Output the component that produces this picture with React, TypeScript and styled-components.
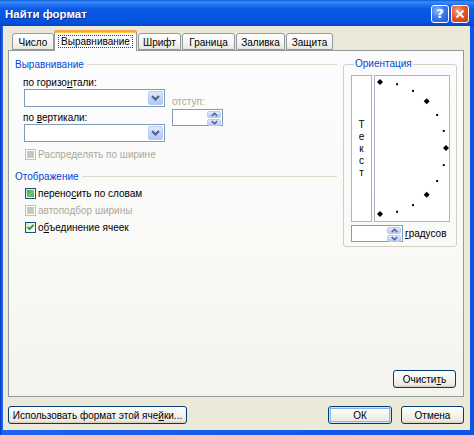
import React from 'react';
import styled, { createGlobalStyle } from 'styled-components';

const GlobalStyle = createGlobalStyle`
  html, body {
    margin: 0;
    padding: 0;
    background: #ffffff;
  }
  body {
    font-family: "Liberation Sans", Arial, sans-serif;
    font-size: 10px;
    color: #000;
  }
  * {
    box-sizing: border-box;
  }
`;

const Window = styled.div`
  width: 474px;
  height: 435px;
  display: flex;
  flex-direction: column;
  background: linear-gradient(90deg, #0831b8 0, #1d63ec 2px, #0b55e4 100%);
  overflow: hidden;
`;

const TitleBar = styled.div`
  height: 26px;
  flex: none;
  display: flex;
  align-items: center;
  gap: 2px;
  padding: 1px 5px 0 5px;
  background: linear-gradient(
    180deg,
    #0a5ad8 0%,
    #3d8df8 8%,
    #2676f4 16%,
    #0b5be8 34%,
    #0556e4 60%,
    #0553e0 82%,
    #0447c8 100%
  );
`;

const Title = styled.div`
  flex: 1;
  color: #ffffff;
  font-weight: bold;
  font-size: 11.5px;
  text-shadow: 1px 1px 0 #0a2a8c;
`;

const TitleButton = styled.div<{ $kind: 'help' | 'close' }>`
  width: 18px;
  height: 18px;
  border: 1px solid #ffffff;
  border-radius: 3px;
  display: flex;
  align-items: center;
  justify-content: center;
  color: #ffffff;
  font-family: "DejaVu Sans", sans-serif;
  font-weight: bold;
  font-size: 13px;
  background: ${({ $kind }) =>
    $kind === 'close'
      ? 'radial-gradient(circle at 35% 30%, #f5a582 0%, #e2582c 45%, #c43b10 100%)'
      : 'radial-gradient(circle at 35% 30%, #8cbcff 0%, #3a7cf2 45%, #1c56d6 100%)'};
`;

const Body = styled.div`
  flex: 1;
  margin: 0 4px 5px 3px;
  padding: 4px 6px 0 5px;
  background: #ece9d8;
  display: flex;
  flex-direction: column;
`;

const TabRow = styled.div`
  height: 20px;
  display: flex;
  align-items: flex-end;
  padding-left: 4px;
  position: relative;
  z-index: 1;
`;

const Tab = styled.div<{ $w: number; $active?: boolean }>`
  width: ${({ $w }) => $w}px;
  height: ${({ $active }) => ($active ? 21 : 17)}px;
  margin-left: ${({ $active }) => ($active ? 0 : 1)}px;
  margin-bottom: ${({ $active }) => ($active ? -1 : 0)}px;
  display: flex;
  align-items: center;
  justify-content: center;
  border: 1px solid #919b9c;
  border-bottom: ${({ $active }) => ($active ? 'none' : '1px solid #919b9c')};
  border-top: ${({ $active }) => ($active ? '2px solid #f4a64a' : '1px solid #919b9c')};
  border-radius: 3px 3px 0 0;
  background: ${({ $active }) =>
    $active ? '#fcfcfe' : 'linear-gradient(180deg, #ffffff 0%, #f7f6f2 50%, #e9e7df 100%)'};
  box-shadow: ${({ $active }) => ($active ? 'inset 0 1px 0 #ffc83c' : 'none')};
  padding-top: ${({ $active }) => ($active ? 0 : 1)}px;
  &:first-child {
    margin-left: 0;
  }
`;

const FocusLabel = styled.span`
  border: 1px dotted #404040;
  padding: 0 2px;
  line-height: 11px;
`;

const Panel = styled.div`
  height: 347px;
  border: 1px solid #919b9c;
  background: linear-gradient(180deg, #fcfcfe 0%, #f9f9f6 60%, #f4f3ee 100%);
  display: flex;
  flex-direction: column;
  padding: 7px 6px 8px 6px;
`;

const PanelTop = styled.div`
  flex: 1;
  display: flex;
  align-items: flex-start;
  gap: 6px;
`;

const LeftColumn = styled.div`
  width: 322px;
  display: flex;
  flex-direction: column;
`;

const GroupHeader = styled.div<{ $top?: number }>`
  height: 13px;
  margin-top: ${({ $top }) => $top ?? 0}px;
  display: flex;
  align-items: center;
  gap: 3px;
  color: #0046d5;
  &::after {
    content: '';
    flex: 1;
    height: 1px;
    background: #d9d8c9;
  }
`;

const AlignBlock = styled.div`
  display: flex;
  gap: 7px;
  padding-left: 8px;
  margin-top: 5px;
`;

const FieldStack = styled.div`
  display: flex;
  flex-direction: column;
`;

const Label = styled.div<{ $disabled?: boolean; $top?: number }>`
  height: 13px;
  line-height: 13px;
  margin-top: ${({ $top }) => $top ?? 0}px;
  color: ${({ $disabled }) => ($disabled ? '#aca899' : '#000')};
  white-space: nowrap;
`;

const U = styled.span`
  text-decoration: underline;
  text-underline-offset: 1px;
`;

const Combo = styled.div<{ $top?: number }>`
  width: 141px;
  height: 18px;
  margin-top: ${({ $top }) => $top ?? 0}px;
  margin-left: 1px;
  border: 1px solid #7f9db9;
  background: #ffffff;
  display: flex;
  justify-content: flex-end;
  padding: 1px;
`;

const DropButton = styled.div`
  width: 15px;
  border: 1px solid #b9cbf3;
  border-radius: 2px;
  background: linear-gradient(180deg, #e1eafe 0%, #c5d5fb 50%, #b3c7f5 100%);
  display: flex;
  align-items: center;
  justify-content: center;
`;

const IndentBlock = styled.div`
  display: flex;
  flex-direction: column;
  padding-top: 19px;
`;

const SpinBox = styled.div<{ $w: number; $top?: number }>`
  width: ${({ $w }) => $w}px;
  height: 17px;
  margin-top: ${({ $top }) => $top ?? 0}px;
  border: 1px solid #7f9db9;
  background: #ffffff;
  display: flex;
  justify-content: flex-end;
  padding: 1px;
`;

const SpinButtons = styled.div`
  width: 14px;
  display: flex;
  flex-direction: column;
  gap: 1px;
`;

const SpinHalf = styled.div`
  flex: 1;
  border: 1px solid #b9cbf3;
  border-radius: 2px;
  background: linear-gradient(180deg, #e1eafe 0%, #c5d5fb 60%, #b8cbf6 100%);
  display: flex;
  align-items: center;
  justify-content: center;
`;

const CheckRow = styled.div<{ $top: number; $disabled?: boolean }>`
  height: 13px;
  margin-top: ${({ $top }) => $top}px;
  padding-left: 10px;
  display: flex;
  align-items: center;
  gap: 2px;
  color: ${({ $disabled }) => ($disabled ? '#aca899' : '#000')};
  white-space: nowrap;
`;

const Box = styled.span<{ $disabled?: boolean }>`
  width: 11px;
  height: 11px;
  flex: none;
  border: 1px solid ${({ $disabled }) => ($disabled ? '#c5c3b4' : '#1c5180')};
  background: ${({ $disabled }) =>
    $disabled ? '#ffffff' : 'linear-gradient(135deg, #dcdcd7 0%, #f5f5f2 60%, #ffffff 100%)'};
  display: flex;
  align-items: center;
  justify-content: center;
`;

const MixedMark = styled.span<{ $disabled?: boolean }>`
  width: 7px;
  height: 7px;
  background: ${({ $disabled }) =>
    $disabled ? '#cac8bb' : 'linear-gradient(135deg, #3fa33f 0%, #73c373 50%, #4db04d 100%)'};
`;

const Orientation = styled.fieldset`
  width: 114px;
  margin: 0;
  padding: 5px 6px 4px 7px;
  border: 1px solid #d0d0bf;
  border-radius: 3px;
  display: flex;
  flex-direction: column;
  gap: 3px;
`;

const Legend = styled.legend`
  color: #0046d5;
  padding: 0 1px;
  margin-left: 3px;
  line-height: 12px;
`;

const DialRow = styled.div`
  display: flex;
  gap: 2px;
  height: 147px;
`;

const TextBox = styled.div`
  width: 21px;
  border: 1px solid #aab6c6;
  background: #ffffff;
  display: flex;
  flex-direction: column;
  align-items: center;
  justify-content: center;
  padding-top: 1px;
`;

const Letter = styled.span`
  line-height: 12px;
  font-size: 10px;
`;

const DialBox = styled.div`
  width: 76px;
  border: 1px solid #aab6c6;
  background: #ffffff;
`;

const DegreeRow = styled.div`
  display: flex;
  align-items: center;
  gap: 2px;
`;

const PanelFooter = styled.div`
  display: flex;
  justify-content: flex-end;
  padding-right: 1px;
`;

const Button = styled.button<{ $w: number; $default?: boolean }>`
  width: ${({ $w }) => $w}px;
  height: 18px;
  padding: 0;
  font: inherit;
  color: #000;
  border: 1px solid #003c74;
  border-radius: 3px;
  background: linear-gradient(180deg, #ffffff 0%, #f6f6f2 40%, #eceae2 85%, #d8d2c6 100%);
  box-shadow: ${({ $default }) =>
    $default
      ? 'inset 0 0 0 1px #cfe2fc, inset 0 0 0 2px #8eb2ea'
      : 'inset 0 -1px 0 #d6d0c5'};
  display: flex;
  align-items: center;
  justify-content: center;
  white-space: nowrap;
`;

const ButtonRow = styled.div`
  display: flex;
  align-items: center;
  gap: 9px;
  margin-top: 9px;
  & > :first-child {
    margin-right: auto;
  }
`;

const Chevron = ({ up }: { up?: boolean }) => (
  <svg width="7" height="5" viewBox="0 0 7 5">
    <path
      d={up ? 'M0.8 4 L3.5 1.3 L6.2 4' : 'M0.8 1 L3.5 3.7 L6.2 1'}
      fill="none"
      stroke="#4d6185"
      strokeWidth="1.6"
    />
  </svg>
);

const ComboField = ({ top }: { top?: number }) => (
  <Combo $top={top}>
    <DropButton>
      <svg width="9" height="6" viewBox="0 0 9 6">
        <path d="M1 1 L4.5 4.5 L8 1" fill="none" stroke="#4d6185" strokeWidth="2" />
      </svg>
    </DropButton>
  </Combo>
);

const Spin = ({ w, top }: { w: number; top?: number }) => (
  <SpinBox $w={w} $top={top}>
    <SpinButtons>
      <SpinHalf>
        <Chevron up />
      </SpinHalf>
      <SpinHalf>
        <Chevron />
      </SpinHalf>
    </SpinButtons>
  </SpinBox>
);

type CheckKind = 'mixed' | 'checked';

const Check = ({
  kind,
  disabled,
  top,
  children,
}: {
  kind: CheckKind;
  disabled?: boolean;
  top: number;
  children: React.ReactNode;
}) => (
  <CheckRow $top={top} $disabled={disabled}>
    <Box $disabled={disabled}>
      {kind === 'mixed' ? (
        <MixedMark $disabled={disabled} />
      ) : (
        <svg width="9" height="9" viewBox="0 0 9 9">
          <path d="M1.5 4 L3.5 6.2 L7.6 1.8" fill="none" stroke="#21a121" strokeWidth="1.8" />
        </svg>
      )}
    </Box>
    <span>{children}</span>
  </CheckRow>
);

const Dial = () => {
  const cx = 5;
  const cy = 72;
  const r = 66;
  const dots = [];
  for (let a = 90; a >= -90; a -= 15) {
    const rad = (a * Math.PI) / 180;
    const x = cx + r * Math.cos(rad);
    const y = cy - r * Math.sin(rad);
    if (a % 45 === 0) {
      dots.push(
        <path
          key={a}
          d={`M${x} ${y - 3} L${x + 3} ${y} L${x} ${y + 3} L${x - 3} ${y} Z`}
          fill="#000"
        />
      );
    } else {
      dots.push(<rect key={a} x={x - 1} y={y - 1} width="2" height="2" fill="#000" />);
    }
  }
  return (
    <svg width="74" height="145" viewBox="0 0 74 145">
      {dots}
    </svg>
  );
};

const tabs = [
  { label: 'Число', w: 42 },
  { label: 'Выравнивание', w: 83, active: true },
  { label: 'Шрифт', w: 43 },
  { label: 'Граница', w: 53 },
  { label: 'Заливка', w: 49 },
  { label: 'Защита', w: 47 },
];

export default function App() {
  return (
    <>
      <GlobalStyle />
      <Window>
        <TitleBar>
          <Title>Найти формат</Title>
          <TitleButton $kind="help">?</TitleButton>
          <TitleButton $kind="close">
            <svg width="10" height="10" viewBox="0 0 10 10">
              <path d="M1.5 1.5 L8.5 8.5 M8.5 1.5 L1.5 8.5" stroke="#fff" strokeWidth="2" />
            </svg>
          </TitleButton>
        </TitleBar>
        <Body>
          <TabRow>
            {tabs.map((t) => (
              <Tab key={t.label} $w={t.w} $active={t.active}>
                {t.active ? <FocusLabel>{t.label}</FocusLabel> : t.label}
              </Tab>
            ))}
          </TabRow>
          <Panel>
            <PanelTop>
              <LeftColumn>
                <GroupHeader>Выравнивание</GroupHeader>
                <AlignBlock>
                  <FieldStack>
                    <Label>
                      по горизо<U>н</U>тали:
                    </Label>
                    <ComboField />
                    <Label $top={4}>
                      по <U>в</U>ертикали:
                    </Label>
                    <ComboField />
                  </FieldStack>
                  <IndentBlock>
                    <Label $disabled>отступ:</Label>
                    <Spin w={51} top={1} />
                  </IndentBlock>
                </AlignBlock>
                <Check kind="mixed" disabled top={6}>
                  Распределять по ширине
                </Check>
                <GroupHeader $top={9}>Отображение</GroupHeader>
                <Check kind="mixed" top={4}>
                  перено<U>с</U>ить по словам
                </Check>
                <Check kind="mixed" disabled top={4}>
                  автоподбор ширины
                </Check>
                <Check kind="checked" top={4}>
                  о<U>б</U>ъединение ячеек
                </Check>
              </LeftColumn>
              <Orientation>
                <Legend>Ориентация</Legend>
                <DialRow>
                  <TextBox>
                    {'Текст'.split('').map((ch, i) => (
                      <Letter key={i}>{ch}</Letter>
                    ))}
                  </TextBox>
                  <DialBox>
                    <Dial />
                  </DialBox>
                </DialRow>
                <DegreeRow>
                  <Spin w={52} />
                  <span>
                    <U>г</U>радусов
                  </span>
                </DegreeRow>
              </Orientation>
            </PanelTop>
            <PanelFooter>
              <Button $w={63}>
                Очисти<U>т</U>ь
              </Button>
            </PanelFooter>
          </Panel>
          <ButtonRow>
            <Button $w={179}>
              Использовать формат этой яче<U>й</U>ки...
            </Button>
            <Button $w={64} $default>
              ОК
            </Button>
            <Button $w={63}>Отмена</Button>
          </ButtonRow>
        </Body>
      </Window>
    </>
  );
}
